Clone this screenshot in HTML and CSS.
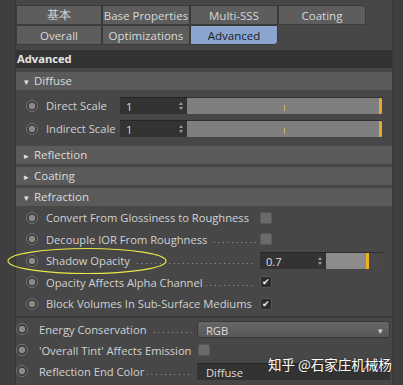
FILE: index.html
```html
<!DOCTYPE html>
<html lang="en">
<head>
  <meta charset="UTF-8">
  <title>Advanced</title>
  <link rel="stylesheet" href="styles.css">
</head>
<body>
  <div class="frame">
    <div class="gutter"></div>
    <div class="panel">
      <div class="tabs">
        <div class="tab">基本</div>
        <div class="tab">Base Properties</div>
        <div class="tab">Multi-SSS</div>
        <div class="tab tab-last">Coating</div>
        <div class="tab">Overall</div>
        <div class="tab">Optimizations</div>
        <div class="tab tab-active">Advanced</div>
      </div>

      <div class="section-title">Advanced</div>

      <div class="group">
        <div class="group-head"><span class="arrow">&#9662;</span>Diffuse</div>
        <div class="group-body body-diffuse">
          <div class="row">
            <span class="radio"></span>
            <span class="label label-short">Direct Scale</span>
            <span class="field field-num">1<span class="spin"></span></span>
            <span class="slider"><span class="tick"></span><span class="end"></span></span>
          </div>
          <div class="row">
            <span class="radio"></span>
            <span class="label label-short">Indirect Scale</span>
            <span class="field field-num">1<span class="spin"></span></span>
            <span class="slider"><span class="tick"></span><span class="end"></span></span>
          </div>
        </div>
      </div>

      <div class="group">
        <div class="group-head"><span class="arrow">&#9656;</span>Reflection</div>
      </div>
      <div class="group">
        <div class="group-head"><span class="arrow">&#9656;</span>Coating</div>
      </div>
      <div class="group">
        <div class="group-head"><span class="arrow">&#9662;</span>Refraction</div>
        <div class="group-body body-refraction">
          <div class="row">
            <span class="radio"></span>
            <span class="label label-long">Convert From Glossiness to Roughness</span>
            <span class="check"></span>
          </div>
          <div class="row">
            <span class="radio"></span>
            <span class="label label-long">Decouple IOR From Roughness<span class="leader"></span></span>
            <span class="check"></span>
          </div>
          <div class="row">
            <span class="radio"></span>
            <span class="label label-long">Shadow Opacity<span class="leader"></span></span>
            <span class="field field-small">0.7<span class="spin"></span></span>
            <span class="slider slider-small"><span class="fill"></span><span class="mark"></span></span>
          </div>
          <div class="row">
            <span class="radio"></span>
            <span class="label label-long">Opacity Affects Alpha Channel<span class="leader leader-tight"></span></span>
            <span class="check checked">&#10004;</span>
          </div>
          <div class="row">
            <span class="radio"></span>
            <span class="label label-long">Block Volumes In Sub-Surface Mediums</span>
            <span class="check checked">&#10004;</span>
          </div>
        </div>
      </div>

      <div class="outer">
        <div class="row">
          <span class="radio"></span>
          <span class="label label-mid">Energy Conservation<span class="leader"></span></span>
          <span class="select">RGB<span class="caret">&#9662;</span></span>
        </div>
        <div class="row">
          <span class="radio"></span>
          <span class="label label-mid">'Overall Tint' Affects Emission</span>
          <span class="check"></span>
        </div>
        <div class="row">
          <span class="radio"></span>
          <span class="label label-mid">Reflection End Color<span class="leader leader-tight"></span></span>
          <span class="field field-wide">Diffuse</span>
        </div>
      </div>
    </div>
    <div class="edge"></div>

    <svg class="mark-ring" width="170" height="32" viewBox="0 0 170 32">
      <ellipse cx="82" cy="16" rx="79" ry="12.5" fill="none" stroke="#e8e84a" stroke-width="1.2"/>
    </svg>
    <div class="watermark">知乎 @石家庄机械杨</div>
  </div>
</body>
</html>
```

FILE: styles.css
```css
body { margin: 0; background: #3e3e3e; font-family: "Open Sans", "Noto Sans", sans-serif; font-size: 11.2px; color: #d2d2d2; }
.frame { position: relative; display: flex; width: 403px; height: 385px; overflow: hidden; }
.gutter { width: 15px; background: #3f3f3f; border-right: 1px solid #343434; }
.panel { width: 377px; background: #474747; padding-top: 5px; }
.edge { width: 10px; background: #3e3e3e; border-left: 1px solid #3a3a3a; }

.tabs { display: grid; grid-template-columns: 86px 88px 88px 88px; grid-auto-rows: 20px; }
.tab { display: flex; align-items: center; justify-content: center; background: #5d5d5d; border: 1px solid #3b3b3b; color: #d8d8d8; font-size: 11.5px; box-sizing: border-box; }
.tab-last { border-top-right-radius: 4px; }
.tab-active { background: #8aa6d0; color: #1c1c1c; border-bottom-right-radius: 4px; }

.section-title { margin-top: 5px; height: 18px; line-height: 18px; background: #333333; color: #e6e6e6; font-weight: bold; padding-left: 1px; }

.group { margin-top: 4px; }
.group + .group { margin-top: 3px; }
.group-head { height: 18px; line-height: 18px; background: #5a5a5a; color: #dcdcdc; font-size: 11.5px; padding-left: 8px; }
.arrow { display: inline-block; width: 10px; font-size: 9px; color: #e0e0e0; }

.group-body { padding-left: 10px; }
.body-diffuse { padding-top: 4px; padding-bottom: 3px; }
.body-diffuse .row { height: 23px; }
.body-refraction { padding-top: 1px; padding-bottom: 1px; border-bottom: 2px solid #3a3a3a; }

.row { display: flex; align-items: center; height: 21.5px; }
.outer { padding-top: 1px; }
.outer .row { height: 21px; }

.radio { width: 12px; height: 12px; border-radius: 50%; box-sizing: border-box; border: 1.5px solid #747474; background: radial-gradient(circle, #8a8a8a 0 3px, #3c3c3c 3.6px); margin-right: 8px; flex: none; }
.outer .radio { margin-right: 11px; }

.label { display: flex; align-items: baseline; white-space: nowrap; overflow: hidden; flex: none; }
.leader { flex: 1; align-self: stretch; margin: 0 4px 0 5px; background-image: radial-gradient(circle, #a0a0a0 0.6px, transparent 0.9px); background-size: 4.6px 3px; background-repeat: repeat-x; background-position: 0 calc(100% - 3px); }
.leader-tight { margin-left: 1px; }
.label-short { width: 74px; }
.label-long { width: 214px; }
.label-mid { width: 158px; }

.field { position: relative; height: 17px; line-height: 17px; background: #333333; border-top: 1px solid #262626; box-sizing: border-box; padding-left: 6px; color: #dcdcdc; flex: none; }
.field-num { width: 67px; }
.field-small { width: 66px; }
.field-wide { width: 193px; padding-left: 9px; }
.spin { position: absolute; right: 4px; top: 4px; width: 0; height: 0; border-left: 2px solid transparent; border-right: 2px solid transparent; border-bottom: 3px solid #9a9a9a; }
.spin::after { content: ""; position: absolute; left: -2px; top: 5px; border-left: 2px solid transparent; border-right: 2px solid transparent; border-top: 3px solid #9a9a9a; }

.slider { position: relative; width: 195px; height: 17px; background: #7f7f7f; border-top: 1px solid #2f2f2f; box-sizing: border-box; flex: none; }
.tick { position: absolute; left: 97px; bottom: 3px; width: 1px; height: 6px; background: #c8b870; }
.end { position: absolute; right: 0; top: 0; bottom: 0; width: 3px; background: #e6a832; border-radius: 0 2px 2px 0; }
.slider-small { width: 57px; background: #484848; }
.fill { position: absolute; left: 0; top: 0; bottom: 0; width: 40px; background: #8c8c8c; }
.mark { position: absolute; left: 40px; top: 0; bottom: 0; width: 3px; background: #f0b020; }

.check { width: 12px; height: 12px; border-radius: 2px; background: #6a6a6a; border: 1px solid #585858; box-sizing: border-box; flex: none; font-size: 9px; line-height: 10px; text-align: center; color: #f0f0f0; }
.check.checked { background: #2c2c2c; border-color: #555; }
.outer .check { margin-left: 1px; }

.select { position: relative; width: 193px; height: 17px; line-height: 17px; box-sizing: border-box; border: 1px solid #383838; border-radius: 3px; background: linear-gradient(#666666, #575757); padding-left: 8px; color: #dcdcdc; flex: none; }
.caret { position: absolute; right: 6px; top: 0; font-size: 9px; color: #d0d0d0; }

.mark-ring { position: absolute; left: 5px; top: 245px; }
.watermark { position: absolute; left: 268px; top: 354px; font-family: "Noto Sans CJK SC", sans-serif; font-size: 13.5px; color: #ffffff; text-shadow: 0 0 2px rgba(0,0,0,0.5); white-space: nowrap; }
```
